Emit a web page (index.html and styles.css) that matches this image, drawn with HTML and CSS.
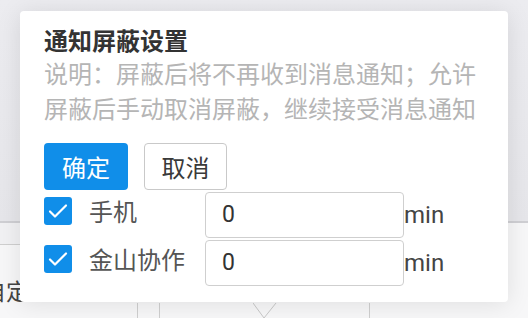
FILE: index.html
```html
<!DOCTYPE html>
<html lang="zh-CN">
<head>
    <meta charset="UTF-8">
    <meta name="viewport" content="width=device-width, initial-scale=1.0">
    <title>通知屏蔽设置</title>
    <link rel="stylesheet" href="styles.css">
</head>
<body>
    <div class="page">
        <div class="header"></div>
        <div class="row">
            <div class="row-cell"></div>
        </div>
        <div class="list">
            <div class="list-item">自定义</div>
        </div>
        <div class="cols">
            <span class="col-line c1"></span>
            <span class="col-line c2"></span>
            <span class="col-line c3"></span>
            <svg class="caret" width="24" height="16" viewBox="0 0 24 16">
                <polyline points="0,0 11,15 23,0" fill="none" stroke="#c8c8c8" stroke-width="1"/>
            </svg>
        </div>
    </div>

    <div class="popover">
        <div class="title">通知屏蔽设置</div>
        <div class="desc">说明：屏蔽后将不再收到消息通知；允许屏蔽后手动取消屏蔽，继续接受消息通知</div>

        <div class="buttons">
            <button class="btn btn-primary">确定</button>
            <button class="btn btn-default">取消</button>
        </div>

        <div class="option">
            <span class="check">
                <svg width="28" height="28" viewBox="0 0 28 28">
                    <polyline points="6,14.5 11,19.5 22,8.5" fill="none" stroke="#fff" stroke-width="2.2" stroke-linecap="round" stroke-linejoin="round"/>
                </svg>
            </span>
            <span class="label">手机</span>
            <input class="minutes" type="text" value="0">
            <span class="unit">min</span>
        </div>
        <div class="option">
            <span class="check">
                <svg width="28" height="28" viewBox="0 0 28 28">
                    <polyline points="6,14.5 11,19.5 22,8.5" fill="none" stroke="#fff" stroke-width="2.2" stroke-linecap="round" stroke-linejoin="round"/>
                </svg>
            </span>
            <span class="label">金山协作</span>
            <input class="minutes" type="text" value="0">
            <span class="unit">min</span>
        </div>
    </div>
</body>
</html>
```

FILE: styles.css
```css
body {
    margin: 0;
    font-family: Roboto, "Noto Sans CJK SC", sans-serif;
    background: #f7f7f8;
    overflow: hidden;
}
.page {
    position: relative;
    height: 318px;
}
.header {
    height: 221px;
    background: linear-gradient(#ececf0, #e6e6ea);
    border-bottom: 2px solid #cfcfd3;
}
.row {
    height: 21px;
}
.row-cell {
    width: 40px;
    height: 21px;
    background: #f1f1f3;
    border-bottom: 1px solid #cfcfcf;
}
.list {
    padding-top: 36px;
}
.list-item {
    margin-left: -17px;
    font-size: 23px;
    line-height: 26px;
    color: #444;
    white-space: nowrap;
}
.cols {
    position: absolute;
    left: 0;
    right: 0;
    bottom: 0;
    height: 15px;
}
.col-line {
    position: absolute;
    top: 0;
    bottom: 0;
    width: 1px;
    background: #cfcfcf;
}
.c1 { left: 137px; }
.c2 { left: 159px; }
.c3 { left: 369px; }
.caret {
    position: absolute;
    left: 253px;
    top: 0;
}

.popover {
    position: absolute;
    left: 20px;
    top: 11px;
    width: 440px;
    padding: 15px 24px 17px;
    background: #fff;
    border-radius: 4px;
    box-shadow: 0 2px 24px rgba(0, 0, 0, 0.10);
}
.title {
    font-size: 24px;
    line-height: 32px;
    font-weight: bold;
    color: #333;
}
.desc {
    font-size: 24px;
    line-height: 35px;
    color: #b5b5b5;
}
.buttons {
    display: flex;
    gap: 16px;
    margin-top: 15px;
}
.btn {
    height: 47px;
    padding: 0;
    font-family: inherit;
    font-size: 24px;
    white-space: nowrap;
    border-radius: 4px;
    cursor: pointer;
}
.btn-primary {
    width: 84px;
    background: #108ee9;
    border: none;
    color: #fff;
}
.btn-default {
    width: 83px;
    background: #fff;
    border: 1.5px solid #c9c9c9;
    color: #3a3a3a;
}
.option {
    display: flex;
    align-items: center;
    height: 45px;
    margin-top: 2px;
}
.option + .option {
    margin-top: 3px;
}
.check {
    width: 28px;
    height: 28px;
    margin-top: -7px;
    border-radius: 3px;
    background: #108ee9;
}
.check svg {
    display: block;
}
.label {
    width: 116px;
    margin-left: 17px;
    margin-top: -8px;
    font-size: 24px;
    color: #555;
}
.minutes {
    box-sizing: border-box;
    width: 199px;
    height: 46px;
    padding: 0 16px;
    font-family: inherit;
    font-size: 23px;
    color: #333;
    border: 1.5px solid #cfcfcf;
    border-radius: 4px;
    outline: none;
}
.unit {
    font-size: 24px;
    color: #444;
}
```
